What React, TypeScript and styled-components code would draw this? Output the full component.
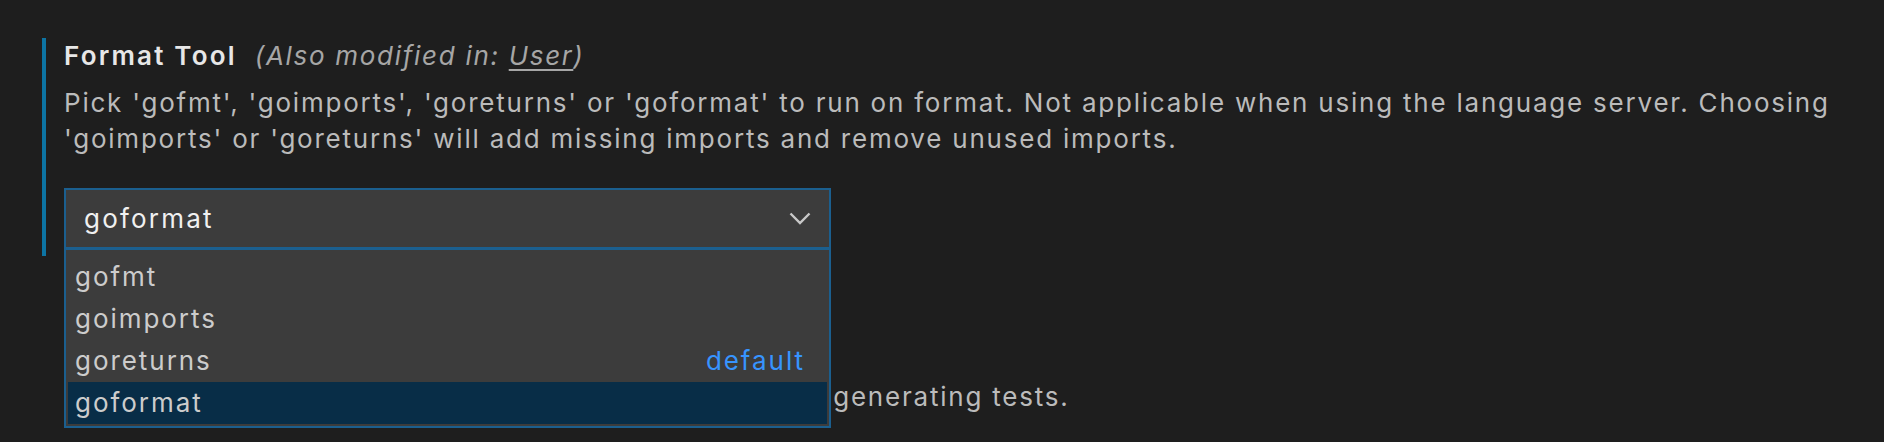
import React from 'react'
import styled, { createGlobalStyle } from 'styled-components'

const GlobalStyle = createGlobalStyle`
    html, body {
        margin: 0;
        padding: 0;
        background: #1e1e1e;
    }
    body {
        font-family: Inter, "Noto Sans", sans-serif;
        letter-spacing: 1.95px;
        -webkit-font-smoothing: antialiased;
    }
`

const Page = styled.div`
    width: 1884px;
    height: 442px;
    padding: 38px 0 0 42px;
    box-sizing: border-box;
    overflow: hidden;
    position: relative;
`

const SettingItem = styled.div<{ $modified?: boolean }>`
    position: relative;
    width: 1832px;
    padding-left: 18px;
    border-left: 4px solid ${p => (p.$modified ? '#0d74a3' : 'transparent')};
    box-sizing: border-box;
`

const TitleRow = styled.div`
    font-size: 26px;
    line-height: 36px;
    white-space: nowrap;
`

const Title = styled.span`
    font-weight: 600;
    color: #e7e7e7;
    letter-spacing: 2.2px;
`

const Modified = styled.span`
    margin-left: 18px;
    font-style: italic;
    color: #a6a6a6;
    letter-spacing: 1.7px;
    & > u {
        text-underline-offset: 4px;
    }
`

const Description = styled.div`
    margin-top: 11px;
    font-size: 26px;
    line-height: 36px;
    color: #bbbbbb;
    letter-spacing: 1.78px;
`

const SelectWrap = styled.div`
    position: relative;
    width: 767px;
    margin-top: 31px;
    padding-bottom: 6px;
`

const SelectBox = styled.div`
    height: 62px;
    box-sizing: border-box;
    border: 2px solid #1b5f8f;
    border-bottom-width: 3px;
    background: #3c3c3c;
    color: #f0f0f0;
    display: flex;
    align-items: center;
    justify-content: space-between;
    padding: 0 18px 0 18px;
    font-size: 26px;
    letter-spacing: 2.2px;
`

const DropList = styled.div`
    position: absolute;
    left: 0;
    top: 62px;
    width: 767px;
    box-sizing: border-box;
    background: #3c3c3c;
    border: 2px solid #1b5f8f;
    border-top: none;
    padding: 6px 2px 2px 2px;
    z-index: 2;
`

const Option = styled.div<{ $selected?: boolean }>`
    height: 42px;
    line-height: 42px;
    padding: 0 22px 0 7px;
    font-size: 26px;
    display: flex;
    justify-content: space-between;
    color: #cccccc;
    background: ${p => (p.$selected ? '#082d47' : 'transparent')};
`

const DefaultTag = styled.span`
    color: #3794ff;
`

const NextItem = styled.div`
    width: 1832px;
    padding: 76px 0 0 32px;
    box-sizing: border-box;
`

const Chevron = () => (
    <svg width="22" height="13" viewBox="0 0 22 13" fill="none">
        <path d="M1.5 1.5 L11 11 L20.5 1.5" stroke="#c8c8c8" strokeWidth="2.4" />
    </svg>
)

const options = ['gofmt', 'goimports', 'goreturns', 'goformat']

function App() {
    return (
        <>
            <GlobalStyle />
            <Page>
                <SettingItem $modified>
                    <TitleRow>
                        <Title>Format Tool</Title>
                        <Modified>(Also modified in: <u>User</u>)</Modified>
                    </TitleRow>
                    <Description>
                        Pick 'gofmt', 'goimports', 'goreturns' or 'goformat' to run on format. Not applicable when using the language server. Choosing 'goimports' or 'goreturns' will add missing imports and remove unused imports.
                    </Description>
                    <SelectWrap>
                        <SelectBox>
                            <span>goformat</span>
                            <Chevron />
                        </SelectBox>
                        <DropList>
                            {options.map(o => (
                                <Option key={o} $selected={o === 'goformat'}>
                                    <span>{o}</span>
                                    {o === 'goreturns' && <DefaultTag>default</DefaultTag>}
                                </Option>
                            ))}
                        </DropList>
                    </SelectWrap>
                </SettingItem>
                <NextItem>
                    <TitleRow>
                        <Title>Generate Tests Flags</Title>
                    </TitleRow>
                    <Description>
                        Additional command line flags to pass to `gotests` for generating tests.
                    </Description>
                </NextItem>
            </Page>
        </>
    )
}

export default App
